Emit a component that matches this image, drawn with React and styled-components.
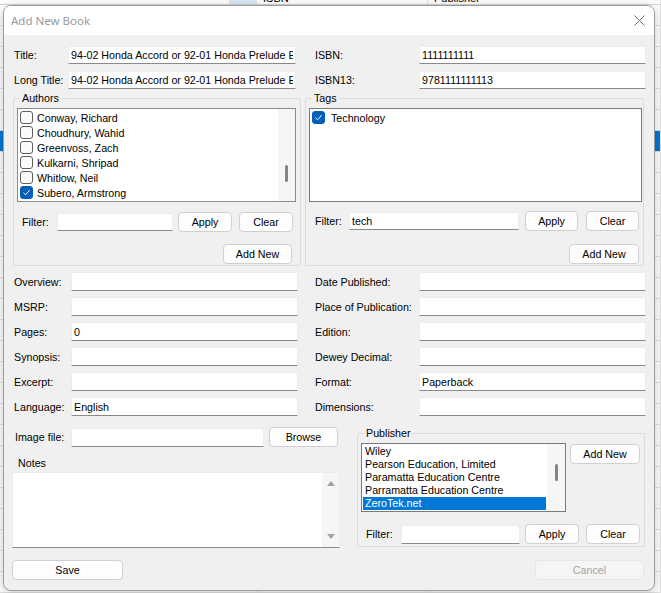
import React from "react";
import styled, { createGlobalStyle } from "styled-components";

const GlobalStyle = createGlobalStyle`
  html, body { margin: 0; padding: 0; }
  body {
    font-family: "Liberation Sans", Arial, sans-serif;
    font-size: 10.7px;
    color: #000;
    background: #fff;
  }
  * { box-sizing: border-box; }
`;

const authors = [
	{ name: "Conway, Richard", checked: false },
	{ name: "Choudhury, Wahid", checked: false },
	{ name: "Greenvoss, Zach", checked: false },
	{ name: "Kulkarni, Shripad", checked: false },
	{ name: "Whitlow, Neil", checked: false },
	{ name: "Subero, Armstrong", checked: true },
];

const publishers = [
	"Wiley",
	"Pearson Education, Limited",
	"Paramatta Education Centre",
	"Parramatta Education Centre",
	"ZeroTek.net",
];

const leftFields = [
	["Overview:", ""],
	["MSRP:", ""],
	["Pages:", "0"],
	["Synopsis:", ""],
	["Excerpt:", ""],
	["Language:", "English"],
];

const rightFields = [
	["Date Published:", ""],
	["Place of Publication:", ""],
	["Edition:", ""],
	["Dewey Decimal:", ""],
	["Format:", "Paperback"],
	["Dimensions:", ""],
];

function CheckBox({ checked }) {
	return (
		<Box $checked={checked}>
			{checked && (
				<svg width="9" height="9" viewBox="0 0 9 9">
					<path d="M1.5 4.8 L3.6 6.8 L7.6 2.2" fill="none" stroke="#fff" strokeWidth="1" />
				</svg>
			)}
		</Box>
	);
}

function Field({ label, value, labelWidth, inputWidth, height }) {
	return (
		<FieldRow>
			<FieldLabel $w={labelWidth}>{label}</FieldLabel>
			<TextBox $w={inputWidth} $h={height} readOnly value={value} />
		</FieldRow>
	);
}

export default function App() {
	return (
		<>
			<GlobalStyle />
			<Desktop>
				<BackTable>
					<BackHeader>
						<HeaderCell />
						<HeaderCell $hot />
						<HeaderCell>ISBN</HeaderCell>
						<HeaderCell>Publisher</HeaderCell>
					</BackHeader>
					{Array.from({ length: 28 }).map((_, i) => (
						<BackRow key={i} $selected={i === 6}>
							<BackCell />
							<BackCell />
							<BackCell />
						</BackRow>
					))}
				</BackTable>

				<Window>
					<TitleBar>
						<Caption>Add New Book</Caption>
						<svg width="11" height="11" viewBox="0 0 11 11">
							<path d="M0.5 0.5 L10.5 10.5 M10.5 0.5 L0.5 10.5" stroke="#6e6e6e" strokeWidth="1" />
						</svg>
					</TitleBar>

					<Body>
						<TwoCols $left={282} $right={331} $gap={19} $rowGap={7}>
							<Field label="Title:" value="94-02 Honda Accord or 92-01 Honda Prelude E" labelWidth={54} inputWidth={228} height={18} />
							<Field label="ISBN:" value="1111111111" labelWidth={104} inputWidth={227} height={18} />
							<Field label="Long Title:" value="94-02 Honda Accord or 92-01 Honda Prelude E" labelWidth={54} inputWidth={228} height={18} />
							<Field label="ISBN13:" value="9781111111113" labelWidth={104} inputWidth={227} height={18} />
						</TwoCols>

						<GroupRow>
							<Group $w={288} $h={174}>
								<Legend>Authors</Legend>
								<ListBox $w={279} $h={94}>
									<ListRows $padTop={1}>
										{authors.map((a) => (
											<CheckRow key={a.name} $gap={4}>
												<CheckBox checked={a.checked} />
												{a.name}
											</CheckRow>
										))}
									</ListRows>
									<ScrollTrack $w={17}>
										<Thumb $top={56} $h={17} />
									</ScrollTrack>
								</ListBox>
								<FilterRow $pad={5} $top={10}>
									<FieldLabel $w={35}>Filter:</FieldLabel>
									<TextBox $w={116} $h={18} readOnly value="" />
									<Button $w={54} $ml={5}>Apply</Button>
									<Button $w={54} $ml={7}>Clear</Button>
								</FilterRow>
								<AddRow $right={5}>
									<Button $w={69}>Add New</Button>
								</AddRow>
							</Group>

							<Group $w={339} $h={174}>
								<Legend>Tags</Legend>
								<ListBox $w={333} $h={94} $dark>
									<ListRows $padTop={1}>
										<CheckRow $gap={6}>
											<CheckBox checked />
											Technology
										</CheckRow>
									</ListRows>
								</ListBox>
								<FilterRow $pad={6} $top={9}>
									<FieldLabel $w={34}>Filter:</FieldLabel>
									<TextBox $w={170} $h={18} readOnly value="tech" />
									<Button $w={53} $ml={6}>Apply</Button>
									<Button $w={53} $ml={8}>Clear</Button>
								</FilterRow>
								<AddRow $right={1} $top={13}>
									<Button $w={70}>Add New</Button>
								</AddRow>
							</Group>
						</GroupRow>

						<MidSection>
							<TwoCols $left={284} $right={331} $gap={17} $rowGap={6}>
								{leftFields.map((f, i) => (
									<React.Fragment key={f[0]}>
										<Field label={f[0]} value={f[1]} labelWidth={57} inputWidth={227} height={19} />
										<Field label={rightFields[i][0]} value={rightFields[i][1]} labelWidth={104} inputWidth={227} height={19} />
									</React.Fragment>
								))}
							</TwoCols>
						</MidSection>

						<BottomRow>
							<LeftColumn>
								<ImageRow>
									<FieldLabel $w={56}>Image file:</FieldLabel>
									<TextBox $w={193} $h={19} readOnly value="" />
									<Button $w={69} $ml={5}>Browse</Button>
								</ImageRow>
								<NotesLabel>Notes</NotesLabel>
								<NotesBox>
									<NotesArea />
									<ScrollTrack $w={17} $arrows>
										<Arrow $up />
										<Arrow />
									</ScrollTrack>
								</NotesBox>
							</LeftColumn>

							<Group $w={288} $h={120}>
								<Legend>Publisher</Legend>
								<PubTop>
									<ListBox $w={205} $h={69} $dark>
										<ListRows $padTop={1} $padX={1}>
											{publishers.map((p, i) => (
												<PubItem key={p} $selected={i === publishers.length - 1}>
													{p}
												</PubItem>
											))}
										</ListRows>
										<ScrollTrack $w={18}>
											<Thumb $top={20} $h={17} />
										</ScrollTrack>
									</ListBox>
									<Button $w={70} $ml={4} $mt={4}>Add New</Button>
								</PubTop>
								<FilterRow $pad={5} $top={12}>
									<FieldLabel $w={35}>Filter:</FieldLabel>
									<TextBox $w={119} $h={19} readOnly value="" />
									<Button $w={54} $ml={5}>Apply</Button>
									<Button $w={54} $ml={7}>Clear</Button>
								</FilterRow>
							</Group>
						</BottomRow>

						<ActionRow>
							<Button $w={111}>Save</Button>
							<Button $w={109} disabled>Cancel</Button>
						</ActionRow>
					</Body>
				</Window>
			</Desktop>
		</>
	);
}

const Desktop = styled("div")`
	position: relative;
	width: 661px;
	height: 593px;
	overflow: hidden;
	background: #fff;
`;

const BackTable = styled("div")`
	margin-top: -14px;
`;

const BackHeader = styled("div")`
	display: grid;
	grid-template-columns: 230px 27px 171px 1fr;
	height: 19px;
	border-bottom: 1px solid #d6d6d6;
`;

const HeaderCell = styled("div")`
	padding: 6px 6px 0;
	font-size: 11px;
	line-height: 12px;
	border-right: 1px solid #e5e5e5;
	background: ${(p) => (p.$hot ? "#d9ebf9" : "#fff")};
`;

const BackRow = styled("div")`
	display: grid;
	grid-template-columns: 257px 171px 1fr;
	height: 21px;
	border-bottom: 1px solid #e2e2e2;
	background: ${(p) => (p.$selected ? "#0078d7" : "#fff")};
`;

const BackCell = styled("div")`
	border-right: 1px solid #e2e2e2;
`;

const Window = styled("div")`
	position: absolute;
	left: 3px;
	top: 5px;
	width: 652px;
	height: 586px;
	border: 1px solid #9c9c9c;
	border-radius: 8px;
	background: #f0f0f0;
	box-shadow: 0 2px 12px rgba(0, 0, 0, 0.22);
	overflow: hidden;
	display: flex;
	flex-direction: column;
`;

const TitleBar = styled("div")`
	height: 29px;
	flex-shrink: 0;
	background: #fff;
	display: flex;
	align-items: center;
	justify-content: space-between;
	padding: 0 9px 0 7px;
`;

const Caption = styled("span")`
	font-family: "Noto Sans", "Open Sans", sans-serif;
	font-size: 11.5px;
	color: #9a9a9a;
`;

const Body = styled("div")`
	padding-top: 11px;
	display: flex;
	flex-direction: column;
`;

const TwoCols = styled("div")`
	display: grid;
	grid-template-columns: ${(p) => p.$left}px ${(p) => p.$right}px;
	column-gap: ${(p) => p.$gap}px;
	row-gap: ${(p) => p.$rowGap}px;
	padding-left: 10px;
`;

const FieldRow = styled("div")`
	display: flex;
	align-items: center;
`;

const FieldLabel = styled("span")`
	width: ${(p) => p.$w}px;
	flex-shrink: 0;
	white-space: nowrap;
`;

const TextBox = styled("input")`
	width: ${(p) => p.$w}px;
	height: ${(p) => p.$h}px;
	flex-shrink: 0;
	margin: 0;
	padding: 0 2px;
	font: inherit;
	color: #000;
	background: #fff;
	border: 1px solid #ececec;
	border-bottom-color: #8a8a8a;
	border-radius: 2px 2px 0 0;
	outline: none;
`;

const GroupRow = styled("div")`
	display: flex;
	gap: 4px;
	margin-top: 3px;
	padding-left: 9px;
`;

const Group = styled("fieldset")`
	width: ${(p) => p.$w}px;
	height: ${(p) => p.$h}px;
	margin: 0;
	padding: 0 3px 0 3px;
	min-width: 0;
	border: 1px solid #dcdcdc;
	border-radius: 2px;
`;

const Legend = styled("legend")`
	margin-left: 3px;
	padding: 0 2px;
	line-height: 13px;
`;

const ListBox = styled("div")`
	width: ${(p) => p.$w}px;
	height: ${(p) => p.$h}px;
	margin-top: 3px;
	flex-shrink: 0;
	display: flex;
	background: #fff;
	border: 1px solid ${(p) => (p.$dark ? "#7a7a7a" : "#8c8c8c")};
	overflow: hidden;
`;

const ListRows = styled("div")`
	flex: 1;
	padding: ${(p) => p.$padTop}px ${(p) => p.$padX || 0}px 0;
	min-width: 0;
`;

const CheckRow = styled("div")`
	height: 15px;
	display: flex;
	align-items: center;
	gap: ${(p) => p.$gap}px;
	padding-left: 2px;
	white-space: nowrap;
`;

const Box = styled("span")`
	width: 13px;
	height: 13px;
	flex-shrink: 0;
	display: inline-flex;
	align-items: center;
	justify-content: center;
	border-radius: 3px;
	border: 1px solid ${(p) => (p.$checked ? "#005fb8" : "#5f5f5f")};
	background: ${(p) => (p.$checked ? "#005fb8" : "#fbfbfb")};
`;

const ScrollTrack = styled("div")`
	width: ${(p) => p.$w}px;
	flex-shrink: 0;
	background: #f6f6f6;
	display: flex;
	flex-direction: column;
	align-items: center;
	justify-content: ${(p) => (p.$arrows ? "space-between" : "flex-start")};
	padding: ${(p) => (p.$arrows ? "8px 0 8px" : "0")};
`;

const Thumb = styled("div")`
	width: 3px;
	height: ${(p) => p.$h}px;
	margin-top: ${(p) => p.$top}px;
	border-radius: 2px;
	background: #858585;
`;

const Arrow = styled("div")`
	width: 0;
	height: 0;
	border-left: 4px solid transparent;
	border-right: 4px solid transparent;
	${(p) => (p.$up ? "border-bottom: 5px solid #a3a3a3;" : "border-top: 5px solid #a3a3a3;")}
`;

const FilterRow = styled("div")`
	display: flex;
	align-items: center;
	height: 20px;
	margin-top: ${(p) => p.$top}px;
	padding-left: ${(p) => p.$pad}px;
`;

const AddRow = styled("div")`
	display: flex;
	justify-content: flex-end;
	margin-top: ${(p) => p.$top || 12}px;
	padding-right: ${(p) => p.$right}px;
`;

const Button = styled("button")`
	width: ${(p) => p.$w}px;
	height: 20px;
	flex-shrink: 0;
	margin: ${(p) => p.$mt || 0}px 0 0 ${(p) => p.$ml || 0}px;
	padding: 0;
	font: inherit;
	color: #000;
	background: #fdfdfd;
	border: 1px solid #d0d0d0;
	border-radius: 4px;

	&:disabled {
		color: #a3a3a3;
		background: #f5f5f5;
		border-color: #e6e6e6;
	}
`;

const MidSection = styled("div")`
	margin-top: 6px;
`;

const BottomRow = styled("div")`
	display: flex;
	align-items: flex-start;
	gap: 17px;
	margin-top: 11px;
	padding-left: 8px;
`;

const LeftColumn = styled("div")`
	width: 328px;
	display: flex;
	flex-direction: column;
`;

const ImageRow = styled("div")`
	display: flex;
	align-items: center;
	height: 20px;
	padding-left: 3px;
`;

const NotesLabel = styled("div")`
	line-height: 13px;
	margin-top: 10px;
	padding-left: 6px;
`;

const NotesBox = styled("div")`
	height: 76px;
	margin-top: 2px;
	display: flex;
	background: #fff;
	border: 1px solid #ececec;
	border-bottom-color: #8a8a8a;
`;

const NotesArea = styled("div")`
	flex: 1;
`;

const PubTop = styled("div")`
	display: flex;
	align-items: flex-start;
`;

const PubItem = styled("div")`
	height: 13px;
	line-height: 13px;
	padding-left: 2px;
	white-space: nowrap;
	color: ${(p) => (p.$selected ? "#fff" : "#000")};
	background: ${(p) => (p.$selected ? "#0078d7" : "transparent")};
`;

const ActionRow = styled("div")`
	display: flex;
	justify-content: space-between;
	margin-top: 12px;
	padding: 0 10px 0 8px;
`;
